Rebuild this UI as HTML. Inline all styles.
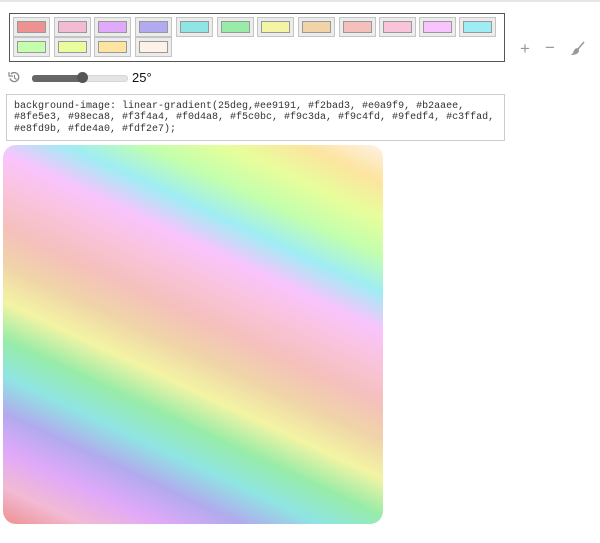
<!DOCTYPE html>
<html><head><style>
body{margin:0;width:600px;height:543px;background:#fff;position:relative;overflow:hidden;font-family:"Liberation Sans",sans-serif}
.top{position:absolute;left:0;top:0;width:600px;height:2px;background:#e6e6e6}
.box{position:absolute;left:9px;top:13px;width:494px;height:47px;border:1px solid #555}
.sw{position:absolute;width:35px;height:18px;background:#ececec;border:1px solid #c4c4c4;box-sizing:content-box}
.sw i{position:absolute;left:3px;top:3px;width:27px;height:10px;border:1px solid #999}
.ico{position:absolute;color:#999;font-size:17px}
.code{position:absolute;left:6px;top:94px;width:499px;height:47px;border:1px solid #ccc;font-family:"Liberation Mono",monospace;font-size:10px;line-height:11.3px;color:#333;padding:6px 0 0 7px;box-sizing:border-box;white-space:pre}
.grad{position:absolute;left:3px;top:145px;width:380px;height:379px;border-radius:13px;background:linear-gradient(25deg,#ee9191, #f2bad3, #e0a9f9, #b2aaee, #8fe5e3, #98eca8, #f3f4a4, #f0d4a8, #f5c0bc, #f9c3da, #f9c4fd, #9fedf4, #c3ffad, #e8fd9b, #fde4a0, #fdf2e7)}
</style></head><body>
<div class="top"></div>
<div class="box"></div>
<div class="sw" style="left:13px;top:17px"><i style="background:#ee9191"></i></div>
<div class="sw" style="left:54px;top:17px"><i style="background:#f2bad3"></i></div>
<div class="sw" style="left:94px;top:17px"><i style="background:#e0a9f9"></i></div>
<div class="sw" style="left:135px;top:17px"><i style="background:#b2aaee"></i></div>
<div class="sw" style="left:176px;top:17px"><i style="background:#8fe5e3"></i></div>
<div class="sw" style="left:217px;top:17px"><i style="background:#98eca8"></i></div>
<div class="sw" style="left:257px;top:17px"><i style="background:#f3f4a4"></i></div>
<div class="sw" style="left:298px;top:17px"><i style="background:#f0d4a8"></i></div>
<div class="sw" style="left:339px;top:17px"><i style="background:#f5c0bc"></i></div>
<div class="sw" style="left:379px;top:17px"><i style="background:#f9c3da"></i></div>
<div class="sw" style="left:419px;top:17px"><i style="background:#f9c4fd"></i></div>
<div class="sw" style="left:459px;top:17px"><i style="background:#9fedf4"></i></div>
<div class="sw" style="left:13px;top:37px"><i style="background:#c3ffad"></i></div>
<div class="sw" style="left:54px;top:37px"><i style="background:#e8fd9b"></i></div>
<div class="sw" style="left:94px;top:37px"><i style="background:#fde4a0"></i></div>
<div class="sw" style="left:135px;top:37px"><i style="background:#fdf2e7"></i></div>
<div class="ico" style="left:520px;top:39px">+</div>
<div class="ico" style="left:545px;top:38px">−</div>
<svg style="position:absolute;left:570px;top:41px" width="16" height="16" viewBox="0 0 16 16"><path d="M14 1 L8 8" stroke="#999" stroke-width="1.5"/><path d="M8 7 C5 7 4 9 3 12 L1 14 C5 14 9 13 9 9 Z" fill="#999"/></svg>
<svg style="position:absolute;left:8px;top:71px" width="13" height="13" viewBox="0 0 13 13"><path d="M3 3 A4.5 4.5 0 1 1 2 7.5" fill="none" stroke="#888" stroke-width="1.3"/><path d="M1 1 L1 5 L5 5" fill="none" stroke="#888" stroke-width="1.2"/><path d="M6.5 4 V7 L8.5 8.5" fill="none" stroke="#888" stroke-width="1.1"/></svg>
<div style="position:absolute;left:32px;top:75px;width:94px;height:5px;border-radius:3px;background:#e4e4e4;border:1px solid #d6d6d6"></div>
<div style="position:absolute;left:32px;top:75px;width:50px;height:7px;border-radius:3px;background:#666"></div>
<div style="position:absolute;left:77px;top:72px;width:11px;height:11px;border-radius:50%;background:#555"></div>
<div style="position:absolute;left:132px;top:70px;font-size:13px;color:#111">25°</div>
<div class="code">background-image: linear-gradient(25deg,#ee9191, #f2bad3, #e0a9f9, #b2aaee,
#8fe5e3, #98eca8, #f3f4a4, #f0d4a8, #f5c0bc, #f9c3da, #f9c4fd, #9fedf4, #c3ffad,
#e8fd9b, #fde4a0, #fdf2e7);</div>
<div class="grad"></div>
</body></html>
